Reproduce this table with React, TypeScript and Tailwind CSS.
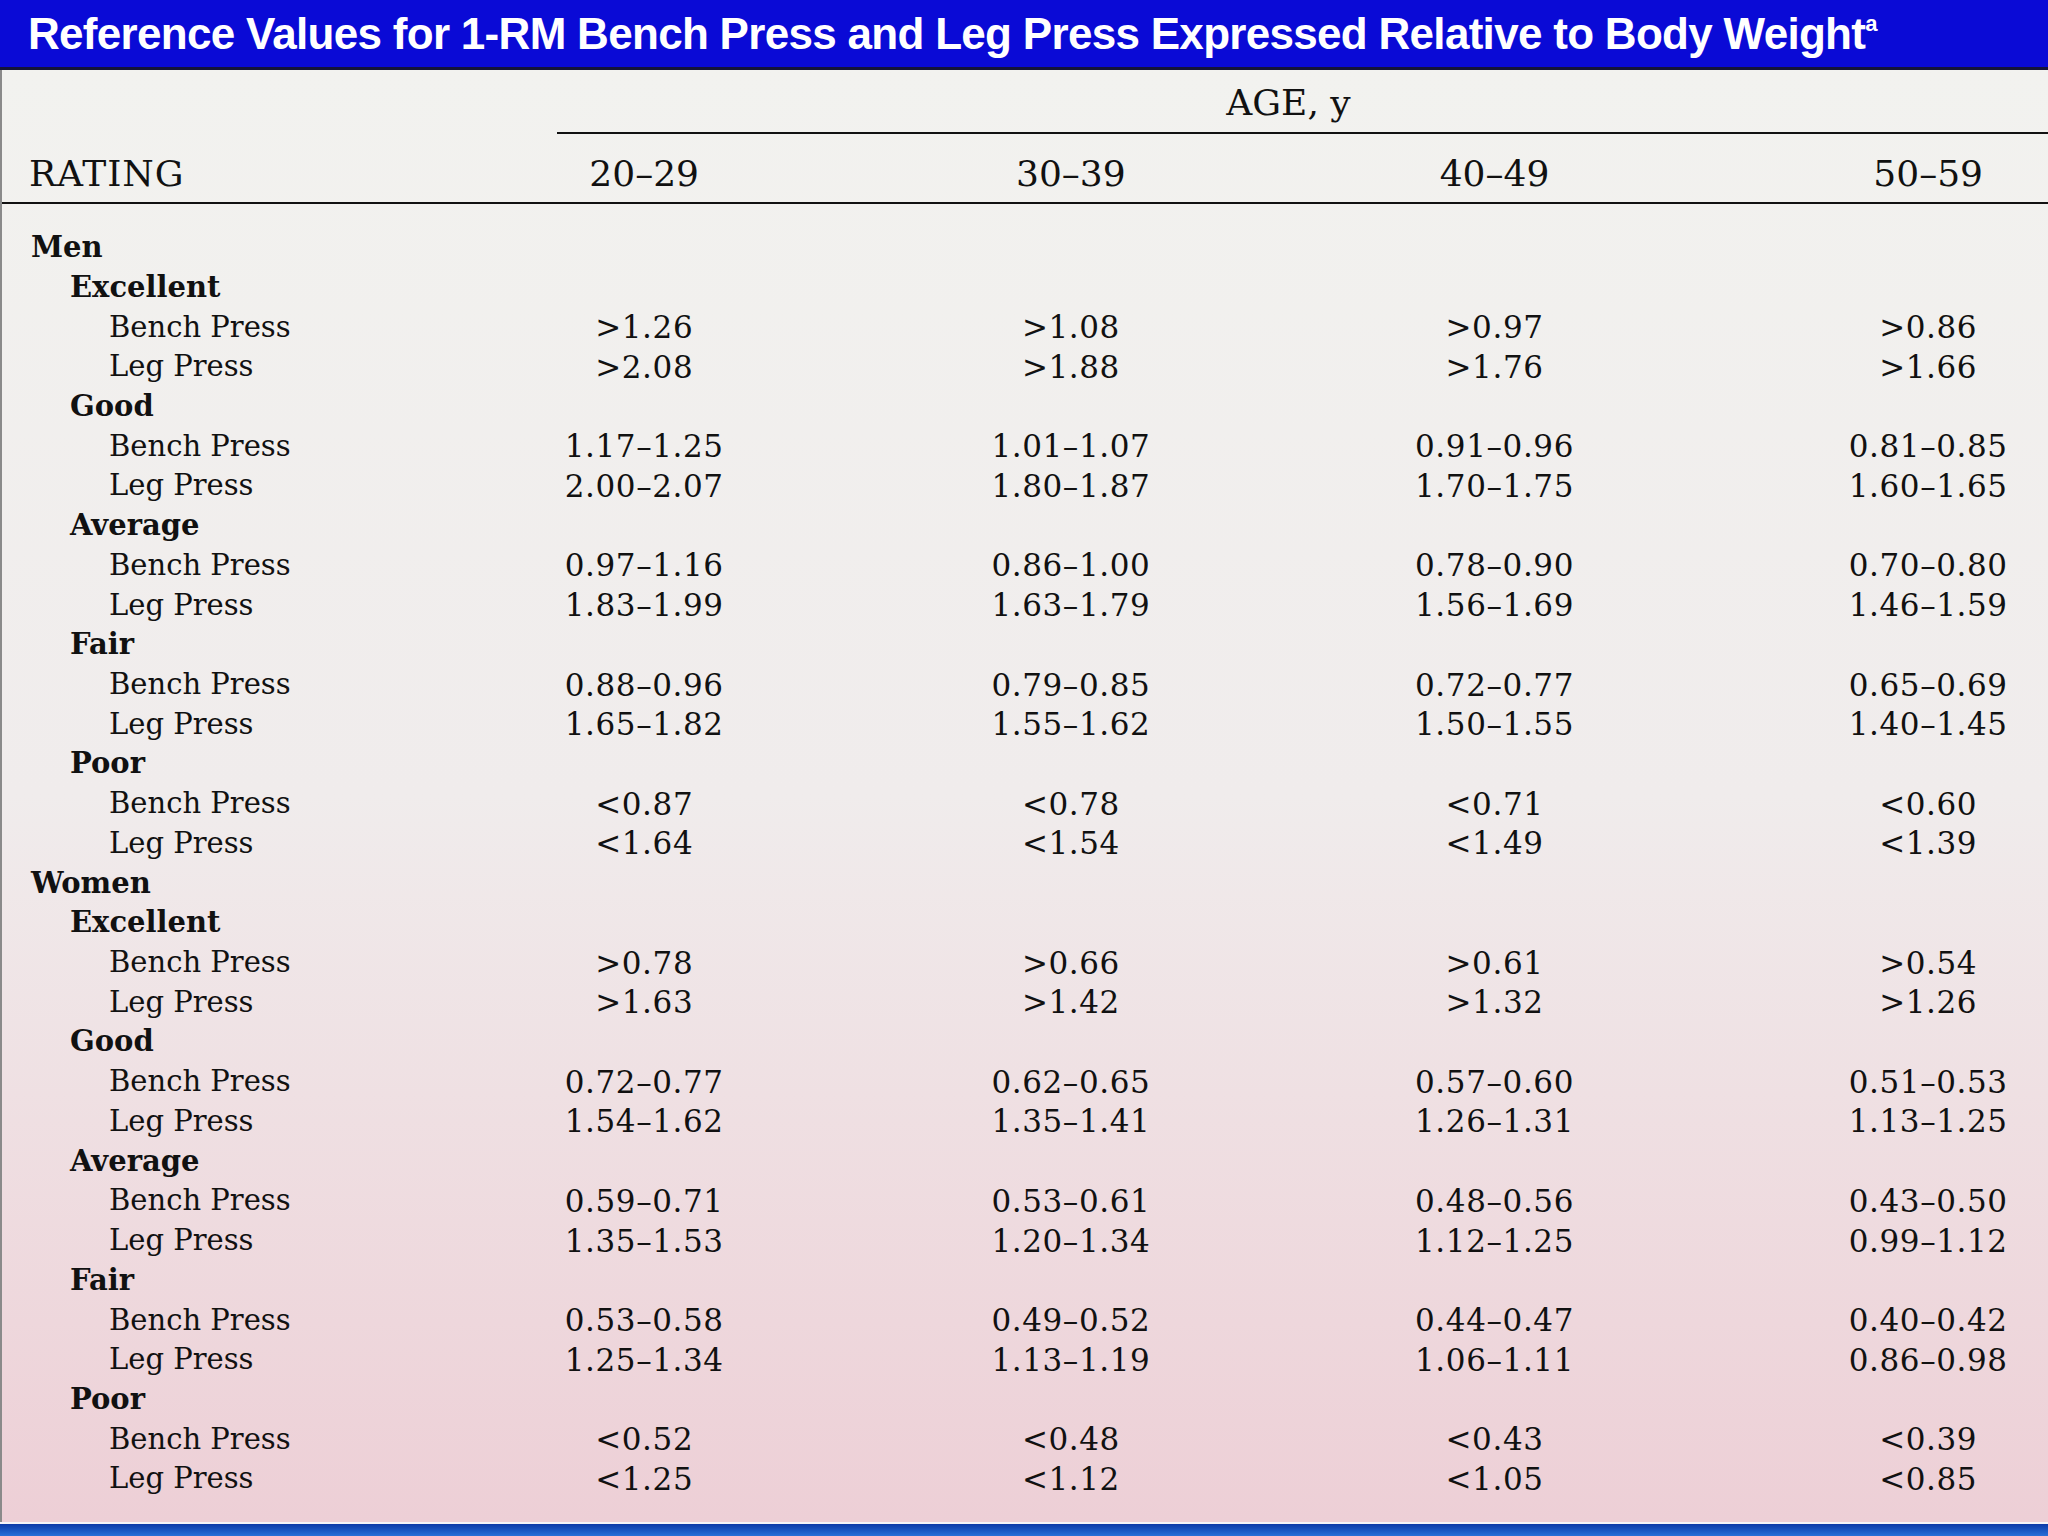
import React from 'react';

type Row = { label: string; level: 0 | 1 | 2; values?: string[] };

const groups: Record<string, string[][]> = {
  Men: [
    ['>1.26', '>1.08', '>0.97', '>0.86'],
    ['>2.08', '>1.88', '>1.76', '>1.66'],
    ['1.17–1.25', '1.01–1.07', '0.91–0.96', '0.81–0.85'],
    ['2.00–2.07', '1.80–1.87', '1.70–1.75', '1.60–1.65'],
    ['0.97–1.16', '0.86–1.00', '0.78–0.90', '0.70–0.80'],
    ['1.83–1.99', '1.63–1.79', '1.56–1.69', '1.46–1.59'],
    ['0.88–0.96', '0.79–0.85', '0.72–0.77', '0.65–0.69'],
    ['1.65–1.82', '1.55–1.62', '1.50–1.55', '1.40–1.45'],
    ['<0.87', '<0.78', '<0.71', '<0.60'],
    ['<1.64', '<1.54', '<1.49', '<1.39'],
  ],
  Women: [
    ['>0.78', '>0.66', '>0.61', '>0.54'],
    ['>1.63', '>1.42', '>1.32', '>1.26'],
    ['0.72–0.77', '0.62–0.65', '0.57–0.60', '0.51–0.53'],
    ['1.54–1.62', '1.35–1.41', '1.26–1.31', '1.13–1.25'],
    ['0.59–0.71', '0.53–0.61', '0.48–0.56', '0.43–0.50'],
    ['1.35–1.53', '1.20–1.34', '1.12–1.25', '0.99–1.12'],
    ['0.53–0.58', '0.49–0.52', '0.44–0.47', '0.40–0.42'],
    ['1.25–1.34', '1.13–1.19', '1.06–1.11', '0.86–0.98'],
    ['<0.52', '<0.48', '<0.43', '<0.39'],
    ['<1.25', '<1.12', '<1.05', '<0.85'],
  ],
};

const ratings = ['Excellent', 'Good', 'Average', 'Fair', 'Poor'];

function buildRows(): Row[] {
  const rows: Row[] = [];
  for (const sex of ['Men', 'Women']) {
    rows.push({ label: sex, level: 0 });
    ratings.forEach((r, i) => {
      rows.push({ label: r, level: 1 });
      rows.push({ label: 'Bench Press', level: 2, values: groups[sex][i * 2] });
      rows.push({ label: 'Leg Press', level: 2, values: groups[sex][i * 2 + 1] });
    });
  }
  return rows;
}

const indent = ['pl-[29px]', 'pl-[68px]', 'pl-[107px]'];

function ValueCells({ values, className = '' }: { values: string[]; className?: string }) {
  return (
    <>
      <div className={`w-[240px] text-center ${className}`}>{values[0]}</div>
      <div className={`w-[240px] ml-[187px] text-center ${className}`}>{values[1]}</div>
      <div className={`w-[240px] ml-[184px] text-center ${className}`}>{values[2]}</div>
      <div className={`w-[240px] ml-[194px] text-center ${className}`}>{values[3]}</div>
    </>
  );
}

export default function App() {
  const rows = buildRows();
  return (
    <div className="w-[2048px] h-[1536px] flex flex-col overflow-hidden bg-[#f2f2ef] font-['DejaVu_Serif',serif] text-[#111]">
      {/* title bar */}
      <div className="h-[70px] shrink-0 bg-[#0a0ad6] border-b-[3px] border-[#14143a] flex items-center pl-[28px]">
        <h1 className="font-['Liberation_Sans',Arial,sans-serif] font-bold text-white text-[44px] tracking-[-0.7px] leading-none">
          Reference Values for 1-RM Bench Press and Leg Press Expressed Relative to Body Weight
          <sup className="text-[22px] top-[-18px]">a</sup>
        </h1>
      </div>

      <div className="flex-1 flex flex-col border-l-2 border-[#8a8a8a] bg-gradient-to-b from-[#f2f2ef] via-[#f0ecec] via-50% to-[#edcfd6]">
        {/* header */}
        <div className="h-[64px] ml-[555px] border-b-2 border-[#111] flex items-center justify-center pr-[28px] pt-[4px] text-[36px]">
          AGE, y
        </div>
        <div className="h-[70px] border-b-2 border-[#111] flex items-center pt-[12px] text-[36px]">
          <div className="w-[523px] pl-[27px] tracking-[1px]">RATING</div>
          <ValueCells values={['20–29', '30–39', '40–49', '50–59']} />
        </div>

        {/* body */}
        <div className="pt-[24px] text-[29px]">
          {rows.map((row, i) => (
            <div key={i} className="h-[39.73px] flex items-center">
              <div className={`w-[523px] ${indent[row.level]} ${row.level < 2 ? 'font-bold' : ''}`}>{row.label}</div>
              {row.values && <ValueCells values={row.values} className="text-[31px] tracking-[0.6px]" />}
            </div>
          ))}
        </div>
      </div>

      {/* bottom strip */}
      <div className="h-[14px] shrink-0 border-t-2 border-[#f4f4f8] bg-gradient-to-b from-[#0c3aa8] to-[#2a6fd8]" />
    </div>
  );
}
